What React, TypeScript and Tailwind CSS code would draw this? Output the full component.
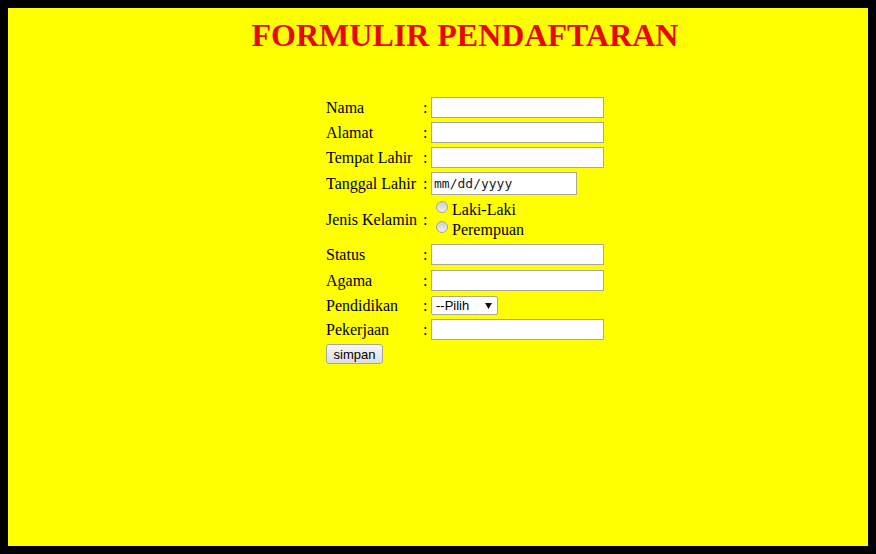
import React from 'react'

// one row of the registration form: label, colon, field
function Row({ label, h, children }: { label: string; h: string; children: React.ReactNode }) {
    return (
        <div className={`grid grid-cols-[97px_8px_1fr] items-center ${h}`}>
            <span>{label}</span>
            <span>:</span>
            <div className="flex items-center">{children}</div>
        </div>
    )
}

function TextBox() {
    return <input type="text" className="w-[173px] h-[21px] bg-white border border-[#aaa89a] px-[2px] text-[13px] outline-none" />
}

function Radio({ label }: { label: string }) {
    return (
        <label className="flex items-center h-[20px]">
            <span className="ml-[5px] mb-[5px] w-[12px] h-[12px] rounded-full border border-[#a4a4a4] bg-linear-to-b from-[#cfcfcf] to-[#f2f2f2]" />
            <span className="ml-[4px]">{label}</span>
        </label>
    )
}

export default function App() {
    return (
        <main className="w-[876px] h-[554px] bg-black p-[8px]">
            <div className="h-full bg-[#ffff00] flex flex-col items-center pl-[54px] font-['Liberation_Serif',serif] text-black text-[16px] leading-[normal]">
                <h1 className="mt-[9px] text-[32px] font-bold text-[#e80606] leading-[normal]">FORMULIR PENDAFTARAN</h1>

                <form className="mt-[41px] w-[278px] flex flex-col">
                    <Row label="Nama" h="h-[25px]"><TextBox /></Row>
                    <Row label="Alamat" h="h-[25px]"><TextBox /></Row>
                    <Row label="Tempat Lahir" h="h-[25px]"><TextBox /></Row>
                    <Row label="Tanggal Lahir" h="h-[27px]">
                        <div className="w-[146px] h-[23px] bg-white border border-[#aaa89a] pl-[2px] flex items-center font-['DejaVu_Sans_Mono',monospace] text-[13px] text-[#222]">
                            mm/dd/yyyy
                        </div>
                    </Row>
                    <Row label="Jenis Kelamin" h="h-[45px]">
                        <div className="flex flex-col">
                            <Radio label="Laki-Laki" />
                            <Radio label="Perempuan" />
                        </div>
                    </Row>
                    <Row label="Status" h="h-[25px]"><TextBox /></Row>
                    <Row label="Agama" h="h-[27px]"><TextBox /></Row>
                    <Row label="Pendidikan" h="h-[23px]">
                        <div className="w-[67px] h-[19px] bg-white border border-[#aaa89a] rounded-[2px] flex items-center justify-between pl-[4px] pr-[5px] font-['Liberation_Sans',sans-serif] text-[13px]">
                            <span>--Pilih</span>
                            <svg width="7" height="6" viewBox="0 0 7 6"><polygon points="0,0 7,0 3.5,6" fill="#111" /></svg>
                        </div>
                    </Row>
                    <Row label="Pekerjaan" h="h-[25px]"><TextBox /></Row>
                    <div className="h-[24px] flex items-center">
                        <button type="button" className="w-[57px] h-[20px] rounded-[3px] border border-[#a6a6a6] bg-linear-to-b from-[#f8f8f8] to-[#dedede] font-['Liberation_Sans',sans-serif] text-[13px] leading-none text-black">
                            simpan
                        </button>
                    </div>
                </form>
            </div>
        </main>
    )
}
